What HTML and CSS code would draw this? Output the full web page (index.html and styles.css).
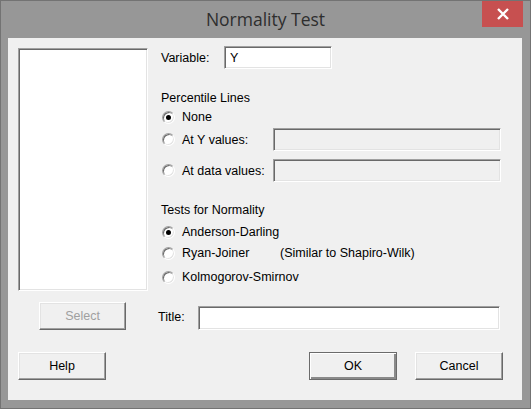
FILE: index.html
```html
<!DOCTYPE html>
<html>
<head>
<meta charset="utf-8">
<link rel="stylesheet" href="styles.css">
</head>
<body>
<div class="window">
  <div class="titlebar">
    <div class="title">Normality Test</div>
    <div class="close"><svg width="14" height="12" viewBox="0 0 14 12"><path d="M2 1 L12 11 M12 1 L2 11" stroke="#fff" stroke-width="2.4"/></svg></div>
  </div>
  <div class="client">
    <div class="main">
      <div class="listbox"></div>
      <div class="form">
        <div class="var-row">
          <span class="var-label">Variable:</span>
          <div class="field var-field">Y</div>
        </div>
        <div class="heading h1">Percentile Lines</div>
        <div class="radio-row r-none"><span class="radio checked"></span><span>None</span></div>
        <div class="radio-row r-aty"><span class="radio"></span><span class="rlabel">At Y values:</span><div class="field disabled wide"></div></div>
        <div class="radio-row r-atd"><span class="radio"></span><span class="rlabel">At data values:</span><div class="field disabled wide"></div></div>
        <div class="heading h2">Tests for Normality</div>
        <div class="radio-row r-ad"><span class="radio checked"></span><span>Anderson-Darling</span></div>
        <div class="radio-row r-rj"><span class="radio"></span><span class="rj">Ryan-Joiner</span><span>(Similar to Shapiro-Wilk)</span></div>
        <div class="radio-row r-ks"><span class="radio"></span><span>Kolmogorov-Smirnov</span></div>
      </div>
    </div>
    <div class="mid">
      <div class="btn select-btn">Select</div>
      <span class="title-label">Title:</span>
      <div class="field title-field"></div>
    </div>
    <div class="footer">
      <div class="btn">Help</div>
      <div class="spacer"></div>
      <div class="btn default">OK</div>
      <div class="btn cancel">Cancel</div>
    </div>
  </div>
</div>
</body>
</html>
```
FILE: styles.css
```css
* { box-sizing: border-box; }
html, body { margin: 0; padding: 0; }
body { width: 531px; height: 409px; overflow: hidden; background: #989898; font-family: "Liberation Sans", Arial, sans-serif; font-size: 12.5px; color: #000; }
.window { width: 531px; height: 409px; background: #979797; border: 1px solid #737373; display: flex; flex-direction: column; }
.titlebar { height: 37px; display: flex; position: relative; justify-content: center; }
.title { font-family: "Open Sans", "Noto Sans", sans-serif; font-size: 17.5px; line-height: 24px; color: #2e2e2e; margin-top: 6px; }
.close { position: absolute; right: 7px; top: 0; width: 41px; height: 26px; background: #c75050; display: flex; align-items: center; justify-content: center; }
.client { margin: 0 7px 0 7px; width: 514px; height: 362px; background: #f0f0f0; padding: 10px 0 0 10px; display: flex; flex-direction: column; }
.main { display: flex; height: 244px; }
.listbox { width: 130px; height: 243px; background: #fff; border: 1px solid; border-color: #a0a0a0 #fff #fff #a0a0a0; box-shadow: inset 1px 1px 0 #696969, inset -1px -1px 0 #e3e3e3; }
.form { margin-left: 13px; margin-top: -2px; width: 350px; display: flex; flex-direction: column; }
.field { background: #fff; border: 1px solid; border-color: #a0a0a0 #fff #fff #a0a0a0; box-shadow: inset 1px 1px 0 #696969, inset -1px -1px 0 #e3e3e3; padding: 4px 4px 0 5px; }
.field.disabled { background: #f0f0f0; }
.var-row { display: flex; align-items: center; height: 23px; }
.var-label { width: 63px; }
.var-field { width: 108px; height: 23px; }
.heading { height: 16px; line-height: 16px; }
.h1 { margin-top: 21px; }
.radio-row { display: flex; align-items: center; }
.radio { width: 13px; height: 13px; border-radius: 50%; background: #fff; border: 1px solid; border-color: #a0a0a0 #fff #fff #a0a0a0; box-shadow: inset 1px 1px 0 #696969, inset -1px -1px 0 #e3e3e3; margin-left: 1px; margin-right: 7px; display: flex; align-items: center; justify-content: center; flex: none; }
.radio.checked::after { content: ""; width: 5px; height: 5px; border-radius: 50%; background: #000; }
.r-none { height: 22px; margin-top: 0; }
.rlabel { width: 91px; }
.wide { width: 228px; height: 23px; }
.r-aty { height: 23px; margin-top: 0; }
.r-atd { height: 23px; margin-top: 8px; }
.h2 { margin-top: 20px; }
.r-ad { height: 22px; margin-top: 3px; }
.r-rj { height: 22px; margin-top: -1px; }
.r-ks { height: 22px; margin-top: 2px; }
.rj { width: 98px; }
.mid { display: flex; align-items: flex-end; height: 28px; margin-top: 10px; }
.btn { width: 88px; height: 28px; display: flex; align-items: center; justify-content: center; background: #f0f0f0; border: 1px solid; border-color: #fff #696969 #696969 #fff; box-shadow: inset -1px -1px 0 #a0a0a0, inset 1px 1px 0 #e3e3e3; }
.select-btn { width: 87px; margin-left: 21px; color: #a0a0a0; }
.title-label { margin-left: 32px; width: 40px; height: 24px; line-height: 22px; }
.title-field { width: 302px; height: 24px; }
.footer { display: flex; margin-top: 22px; height: 28px; }
.spacer { flex: 1; }
.btn.default { border-color: #6b6b6b; box-shadow: inset 1px 1px 0 #fff, inset -2px -2px 0 #8a8a8a; margin-right: 18px; }
.btn.cancel { margin-right: 19px; }
```
